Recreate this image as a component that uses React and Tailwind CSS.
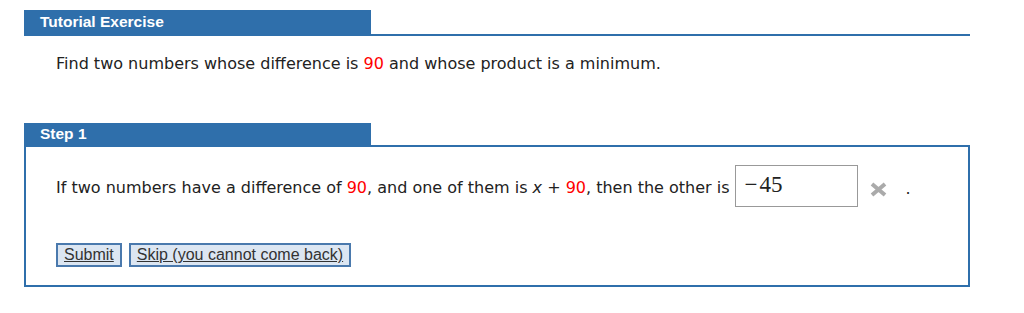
import React from "react";

const blue = "bg-[#2f6fab]";

export default function App() {
  return (
    <div className="w-[1024px] h-[313px] bg-white pl-[24px] pt-[10px] text-[#222]" style={{ fontFamily: "'DejaVu Sans', Verdana, sans-serif" }}>
      <div className="w-[946px]">
        <div className="border-b-2 border-[#2f6fab]">
          <div className={`w-[347px] h-[24px] ${blue} pl-[16px] text-white text-[15.5px] font-bold leading-[24px]`} style={{ fontFamily: "'Liberation Sans', Arial, sans-serif" }}>
            Tutorial Exercise
          </div>
        </div>
        <div className="pl-[32px] pt-[17px] text-[16px] leading-[22px]">
          Find two numbers whose difference is <span className="text-[#ff0000]">90</span> and whose product is a minimum.
        </div>

        <div className="mt-[48px]">
          <div className={`w-[347px] h-[24px] ${blue} pl-[16px] text-white text-[15.5px] font-bold leading-[22px]`} style={{ fontFamily: "'Liberation Sans', Arial, sans-serif" }}>
            Step 1
          </div>
          <div className="-mt-[2px] border-2 border-[#2f6fab] h-[142px] pl-[30px] pt-[18px]">
            <div className="flex items-center text-[16px]">
              <span className="mt-[4px]">
                If two numbers have a difference of <span className="text-[#ff0000]">90</span>, and one of them is <i>x</i> + <span className="text-[#ff0000]">90</span>, then the other is
              </span>
              <div className="ml-[6px] w-[123px] h-[42px] border border-[#999] flex items-center pl-[8px] pb-[2px] text-[23px] leading-[26px]" style={{ fontFamily: "'Liberation Serif', 'Times New Roman', serif" }}>
                <span className="mr-[2px]">−</span>45
              </div>
              <svg className="ml-[11px] mt-[6px]" width="19" height="15" viewBox="0 0 19 15">
                <path d="M3 2 L16 13 M16 2 L3 13" stroke="#aaaaaa" strokeWidth="4" strokeLinecap="butt" />
              </svg>
              <span className="ml-[17px] mt-[6px]">.</span>
            </div>
            <div className="flex gap-[7px] mt-[36px]" style={{ fontFamily: "'Liberation Sans', Arial, sans-serif" }}>
              <button className="h-[24px] px-[6px] bg-[#dce6f2] border-2 border-[#4a79ad] text-[16px] leading-[18px] text-[#333] underline">Submit</button>
              <button className="h-[24px] px-[6px] bg-[#dce6f2] border-2 border-[#4a79ad] text-[16px] leading-[18px] text-[#333] underline">Skip (you cannot come back)</button>
            </div>
          </div>
        </div>
      </div>
    </div>
  );
}
